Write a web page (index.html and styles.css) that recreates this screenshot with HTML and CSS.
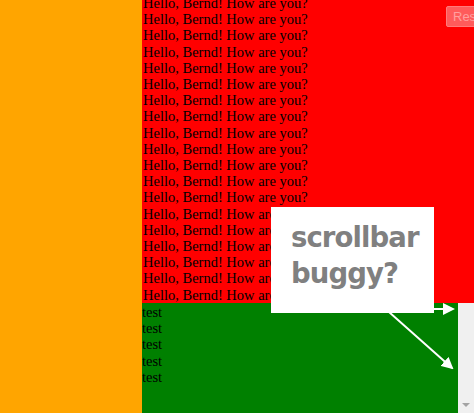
FILE: index.html
```html
<!DOCTYPE html>
<html>
<head>
<meta charset="utf-8">
<link rel="stylesheet" href="styles.css">
</head>
<body>
<div class="page">
  <div class="side"></div>
  <div class="main">
    <div class="top">
      <div class="lines">
        <div>Hello, Bernd! How are you?</div>
        <div>Hello, Bernd! How are you?</div>
        <div>Hello, Bernd! How are you?</div>
        <div>Hello, Bernd! How are you?</div>
        <div>Hello, Bernd! How are you?</div>
        <div>Hello, Bernd! How are you?</div>
        <div>Hello, Bernd! How are you?</div>
        <div>Hello, Bernd! How are you?</div>
        <div>Hello, Bernd! How are you?</div>
        <div>Hello, Bernd! How are you?</div>
        <div>Hello, Bernd! How are you?</div>
        <div>Hello, Bernd! How are you?</div>
        <div>Hello, Bernd! How are you?</div>
        <div>Hello, Bernd! How are you?</div>
        <div>Hello, Bernd! How are you?</div>
        <div>Hello, Bernd! How are you?</div>
        <div>Hello, Bernd! How are you?</div>
        <div>Hello, Bernd! How are you?</div>
        <div>Hello, Bernd! How are you?</div>
      </div>
    </div>
    <div class="bottom">
      <div class="tests">
        <div>test</div>
        <div>test</div>
        <div>test</div>
        <div>test</div>
        <div>test</div>
      </div>
      <div class="scrollbar"><span class="down"></span></div>
    </div>
  </div>
</div>
<button class="reset">Reset</button>
<div class="note">scrollbar<br>buggy?</div>
<svg class="arrows" width="474" height="413" viewBox="0 0 474 413">
  <defs>
    <marker id="ah" markerWidth="6" markerHeight="6" refX="5" refY="3" orient="auto" markerUnits="strokeWidth">
      <path d="M0,0 L6,3 L0,6 Z" fill="#fff"/>
    </marker>
  </defs>
  <line x1="434" y1="309" x2="453" y2="309" stroke="#fff" stroke-width="2" marker-end="url(#ah)"/>
  <line x1="389" y1="312" x2="452" y2="368" stroke="#fff" stroke-width="2" marker-end="url(#ah)"/>
</svg>
</body>
</html>
```
FILE: styles.css
```css
html, body {
  margin: 0;
  padding: 0;
  overflow: hidden;
  width: 474px;
  height: 413px;
}
.page {
  display: flex;
  width: 474px;
  height: 413px;
}
.side {
  width: 142px;
  flex: none;
  background: #ffa500;
}
.main {
  flex: 1;
  display: flex;
  flex-direction: column;
}
.top {
  height: 303px;
  flex: none;
  background: #ff0000;
  overflow: hidden;
}
.lines {
  margin-top: -5px;
  padding-left: 1px;
  font-family: "Liberation Serif", serif;
  font-size: 14.5px;
  line-height: 16.2px;
  color: #000;
}
.bottom {
  flex: 1;
  display: flex;
  background: #008000;
}
.tests {
  flex: 1;
  padding-top: 1px;
  font-family: "Liberation Serif", serif;
  font-size: 14.5px;
  line-height: 16.2px;
  color: #000;
}
.scrollbar {
  width: 16px;
  background: #f0f0f0;
  display: flex;
  align-items: flex-end;
  justify-content: center;
}
.down {
  width: 0;
  height: 0;
  border-left: 4px solid transparent;
  border-right: 4px solid transparent;
  border-top: 4px solid #a3a3a3;
  margin-bottom: 6px;
}
.reset {
  position: absolute;
  left: 446px;
  top: 6px;
  height: 21px;
  padding: 0 6px;
  background: #ff5b5b;
  border: 1px solid #ff7a7a;
  border-radius: 2px;
  color: #ff9f9f;
  font-family: "Liberation Sans", sans-serif;
  font-size: 13px;
  white-space: nowrap;
}
.note {
  position: absolute;
  left: 271px;
  top: 207px;
  width: 163px;
  height: 106px;
  box-sizing: border-box;
  padding: 12px 0 0 20px;
  background: #fff;
  color: #808080;
  font-family: "DejaVu Sans", sans-serif;
  font-weight: bold;
  font-size: 27.5px;
  line-height: 36px;
  letter-spacing: -0.9px;
}
.arrows {
  position: absolute;
  left: 0;
  top: 0;
}
```
